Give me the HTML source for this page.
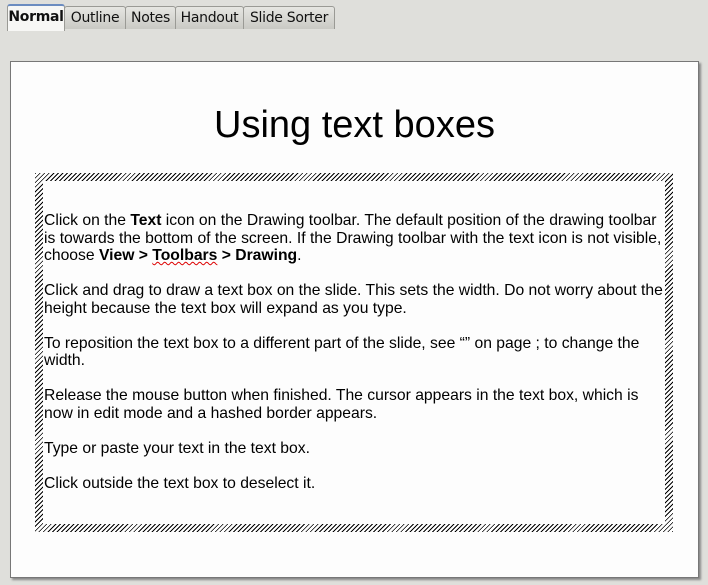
<!DOCTYPE html>
<html><head><style>
body{margin:0;width:708px;height:585px;background:#dfdfdb;position:relative;overflow:hidden;font-family:"Liberation Sans",sans-serif}
.tab{position:absolute;top:6px;height:22px;border:1px solid #9a9a95;border-bottom:none;border-radius:3px 3px 0 0;background:linear-gradient(#e6e6e2,#c9c9c4);font-family:"DejaVu Sans",sans-serif;font-size:14px;line-height:23px;text-align:center;color:#111;letter-spacing:-0.3px}
.tab.a{background:#f7f7f5;top:4px;height:25px;font-weight:bold;border-top:2px solid #6b8cc0}
.slide{position:absolute;left:10px;top:61px;width:687px;height:515px;background:#fdfdfd;border:1px solid #777;box-shadow:2px 2px 2px #888}
.hatch{position:absolute;left:35px;top:173px;width:638px;height:359px;background:repeating-linear-gradient(135deg,#000 0 1px,#fff 1px 3.2px)}
.inner{position:absolute;left:43px;top:181px;width:622px;height:343px;background:#fdfdfd}
.title{position:absolute;left:10px;width:689px;top:104px;text-align:center;font-size:38px;color:#000}
.txt{position:absolute;left:44px;top:212px;font-size:15.7px;line-height:17.5px;color:#000;white-space:nowrap}
u{text-decoration:underline wavy #d00;text-decoration-thickness:1px}
</style></head><body>
<div class="tab a" style="left:7px;width:56px">Normal</div>
<div class="tab" style="left:64px;width:60px">Outline</div>
<div class="tab" style="left:125px;width:49px">Notes</div>
<div class="tab" style="left:175px;width:67px">Handout</div>
<div class="tab" style="left:243px;width:90px">Slide Sorter</div>
<div class="slide"></div>
<div class="title">Using text boxes</div>
<div class="hatch"></div><div class="inner"></div>
<div class="txt">Click on the <b>Text</b> icon on the Drawing toolbar. The default position of the drawing toolbar<br>is towards the bottom of the screen. If the Drawing toolbar with the text icon is not visible,<br>choose <b>View &gt; <u>Toolbars</u> &gt; Drawing</b>.<br><br>Click and drag to draw a text box on the slide. This sets the width. Do not worry about the<br>height because the text box will expand as you type.<br><br>To reposition the text box to a different part of the slide, see “” on page ; to change the<br>width.<br><br>Release the mouse button when finished. The cursor appears in the text box, which is<br>now in edit mode and a hashed border appears.<br><br>Type or paste your text in the text box.<br><br>Click outside the text box to deselect it.</div>
</body></html>
